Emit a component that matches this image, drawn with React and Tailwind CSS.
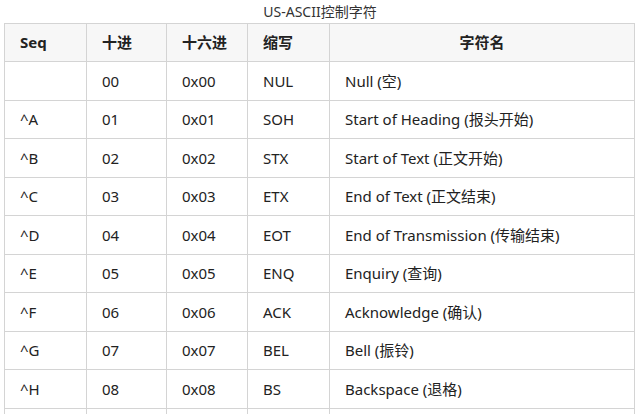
import React from 'react';

const rows = [
    ['', '00', '0x00', 'NUL', 'Null (空)'],
    ['^A', '01', '0x01', 'SOH', 'Start of Heading (报头开始)'],
    ['^B', '02', '0x02', 'STX', 'Start of Text (正文开始)'],
    ['^C', '03', '0x03', 'ETX', 'End of Text (正文结束)'],
    ['^D', '04', '0x04', 'EOT', 'End of Transmission (传输结束)'],
    ['^E', '05', '0x05', 'ENQ', 'Enquiry (查询)'],
    ['^F', '06', '0x06', 'ACK', 'Acknowledge (确认)'],
    ['^G', '07', '0x07', 'BEL', 'Bell (振铃)'],
    ['^H', '08', '0x08', 'BS', 'Backspace (退格)'],
    ['', '', '', '', ''], // next row, cut off by the window
];

const App = () => {
    return (
        <div className="w-[640px] h-[414px] overflow-hidden bg-white text-[#222] font-['Noto_Sans','Noto_Sans_CJK_SC',sans-serif]">
            <div className="h-[23px] text-center text-[14px] leading-[23px] text-[#333]">US-ASCII控制字符</div>
            <table className="ml-[4px] w-[631px] border-collapse table-fixed text-[15px]">
                <colgroup>
                    <col className="w-[82px]" />
                    <col className="w-[80px]" />
                    <col className="w-[81px]" />
                    <col className="w-[82px]" />
                    <col />
                </colgroup>
                <thead>
                    <tr className="h-[38px] bg-[#f7f7f7] font-bold">
                        <th className="border border-[#d4d4d4] pl-[15px] text-left">Seq</th>
                        <th className="border border-[#d4d4d4] pl-[15px] text-left">十进</th>
                        <th className="border border-[#d4d4d4] pl-[15px] text-left">十六进</th>
                        <th className="border border-[#d4d4d4] pl-[15px] text-left">缩写</th>
                        <th className="border border-[#d4d4d4] text-center">字符名</th>
                    </tr>
                </thead>
                <tbody>
                    {rows.map((row, i) => (
                        <tr key={i} className={i % 2 === 0 ? 'h-[39px]' : 'h-[38px]'}>
                            {row.map((cell, j) => (
                                <td key={j} className="border border-[#d4d4d4] pl-[15px] whitespace-nowrap">{cell}</td>
                            ))}
                        </tr>
                    ))}
                </tbody>
            </table>
        </div>
    );
};

export default App;
